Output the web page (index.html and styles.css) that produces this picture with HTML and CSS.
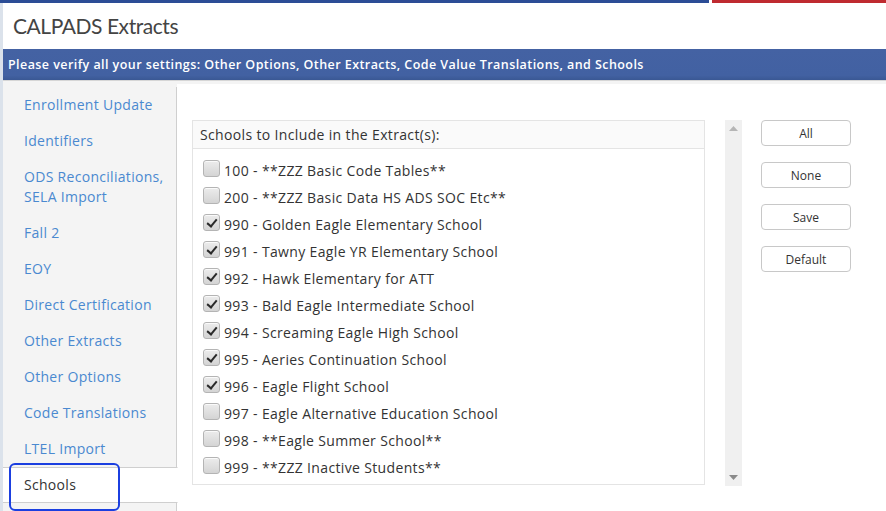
FILE: index.html
```html
<!DOCTYPE html>
<html lang="en">
<head>
<meta charset="utf-8">
<title>CALPADS Extracts</title>
<link rel="stylesheet" href="styles.css">
</head>
<body>
<div class="topline"><span class="topline-blue"></span><span class="topline-red"></span></div>
<div class="page">
  <h1 class="title">CALPADS Extracts</h1>
  <div class="notice">Please verify all your settings: Other Options, Other Extracts, Code Value Translations, and Schools</div>
  <div class="main">
    <nav class="tabs">
      <a class="tab">Enrollment Update</a>
      <a class="tab">Identifiers</a>
      <a class="tab">ODS Reconciliations,<br>SELA Import</a>
      <a class="tab">Fall 2</a>
      <a class="tab">EOY</a>
      <a class="tab">Direct Certification</a>
      <a class="tab">Other Extracts</a>
      <a class="tab">Other Options</a>
      <a class="tab">Code Translations</a>
      <a class="tab">LTEL Import</a>
      <a class="tab tab-active">Schools</a>
      <div class="tabs-rest"></div>
    </nav>
    <section class="panel">
      <div class="listbox">
        <div class="listbox-head">Schools to Include in the Extract(s):</div>
        <ul class="schools">
          <li><span class="cb"></span>100 - **ZZZ Basic Code Tables**</li>
          <li><span class="cb"></span>200 - **ZZZ Basic Data HS ADS SOC Etc**</li>
          <li><span class="cb checked"></span>990 - Golden Eagle Elementary School</li>
          <li><span class="cb checked"></span>991 - Tawny Eagle YR Elementary School</li>
          <li><span class="cb checked"></span>992 - Hawk Elementary for ATT</li>
          <li><span class="cb checked"></span>993 - Bald Eagle Intermediate School</li>
          <li><span class="cb checked"></span>994 - Screaming Eagle High School</li>
          <li><span class="cb checked"></span>995 - Aeries Continuation School</li>
          <li><span class="cb checked"></span>996 - Eagle Flight School</li>
          <li><span class="cb"></span>997 - Eagle Alternative Education School</li>
          <li><span class="cb"></span>998 - **Eagle Summer School**</li>
          <li><span class="cb"></span>999 - **ZZZ Inactive Students**</li>
        </ul>
      </div>
      <div class="scrollbar">
        <svg class="arrow" width="9" height="5" viewBox="0 0 9 5"><path d="M4.5 0 L9 5 H0 Z" fill="#b5b5b5"/></svg>
        <svg class="arrow" width="9" height="5" viewBox="0 0 9 5"><path d="M0 0 H9 L4.5 5 Z" fill="#8a8a8a"/></svg>
      </div>
      <div class="buttons">
        <button class="btn">All</button>
        <button class="btn">None</button>
        <button class="btn">Save</button>
        <button class="btn">Default</button>
      </div>
    </section>
  </div>
</div>
</body>
</html>
```
FILE: styles.css
```css
html, body {
  margin: 0;
  padding: 0;
  background: #fff;
  font-family: "Open Sans", "Lato", sans-serif;
  color: #333;
  overflow: hidden;
}

/* thin two-colour rule along the top edge */
.topline {
  display: flex;
  height: 3px;
  gap: 3px;
}
.topline-blue {
  width: 709px;
  background: #2c4d96;
}
.topline-red {
  flex: 1;
  background: #bf2a30;
}

.page {
  border-left: 3px solid #dbe2eb;
  height: 508px;
}

.title {
  margin: 0;
  height: 46px;
  padding-left: 10px;
  font-family: "Lato", sans-serif;
  font-size: 21px;
  font-weight: 400;
  line-height: 46px;
  color: #444;
  letter-spacing: -0.45px;
}

.notice {
  height: 31px;
  line-height: 31px;
  padding-left: 5px;
  background: linear-gradient(#4462a3 0, #4261a2 85%, #3a5894 100%);
  color: #fff;
  font-size: 12.5px;
  font-weight: 600;
  letter-spacing: 0.43px;
  border-bottom: 1px solid #d6d6d6;
  white-space: nowrap;
}

.main {
  display: flex;
  background: #f4f4f4;
  padding-top: 3px;
  height: 428px;
}

.tabs {
  width: 174px;
  display: flex;
  flex-direction: column;
  padding-top: 3px;
}
.tab {
  display: block;
  padding: 8px 0 8px 21px;
  line-height: 20px;
  font-size: 14px;
  letter-spacing: 0.3px;
  color: #4a89d0;
  border-right: 1px solid #cfcfcf;
  white-space: nowrap;
}
.tab-active {
  position: relative;
  background: #fff;
  color: #333;
  border-top: 1px solid #cfcfcf;
  border-bottom: 1px solid #cfcfcf;
  border-right-color: #fff;
  padding: 7px 1px 7px 21px;
  margin-right: -1px;
}
/* keyboard focus ring on the current tab */
.tab-active::after {
  content: "";
  position: absolute;
  left: 6px;
  top: -5px;
  width: 107px;
  height: 44px;
  border: 2px solid #1b3fe0;
  border-radius: 6px;
}
.tabs-rest {
  flex: 1;
  border-right: 1px solid #cfcfcf;
}

.panel {
  flex: 1;
  background: #fff;
  display: flex;
  align-items: flex-start;
  padding: 36px 0 0 15px;
}

.listbox {
  width: 511px;
  border: 1px solid #e4e4e4;
}
.listbox-head {
  height: 27px;
  line-height: 27px;
  padding-left: 7px;
  background: #fafafa;
  border-bottom: 1px solid #e4e4e4;
  font-size: 14px;
  letter-spacing: 0.35px;
  color: #333;
}
.schools {
  list-style: none;
  margin: 0;
  padding: 8px 0 3px 10px;
}
.schools li {
  display: flex;
  align-items: center;
  height: 27px;
  font-size: 14px;
  letter-spacing: 0.35px;
  color: #333;
  white-space: nowrap;
}
.cb {
  position: relative;
  flex: none;
  width: 15px;
  height: 15px;
  margin: -4px 4px 0 0;
  border: 1px solid #b4b4b4;
  border-radius: 3px;
  background: linear-gradient(#ececec, #d4d4d4);
  box-shadow: inset 0 1px 0 #fafafa;
}
.cb.checked::after {
  content: "";
  position: absolute;
  left: 4.5px;
  top: 1.5px;
  width: 4px;
  height: 8px;
  border: solid #2a2a2a;
  border-width: 0 2.5px 2.5px 0;
  transform: rotate(40deg);
}

.scrollbar {
  margin-left: 20px;
  width: 17px;
  height: 366px;
  background: #f0f0f0;
  display: flex;
  flex-direction: column;
  justify-content: space-between;
  align-items: center;
  padding: 6px 0 6px;
  box-sizing: border-box;
}
.arrow {
  display: block;
}

.buttons {
  margin-left: 19px;
  display: flex;
  flex-direction: column;
  gap: 16px;
}
.btn {
  width: 90px;
  height: 26px;
  background: #fff;
  border: 1px solid #c8c8c8;
  border-radius: 4px;
  font-family: inherit;
  font-size: 12px;
  color: #333;
  padding: 0;
}
```
